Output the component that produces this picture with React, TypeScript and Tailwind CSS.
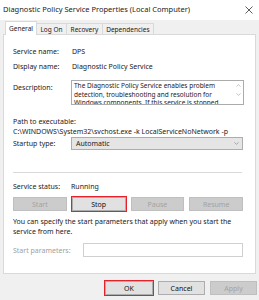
import { ChevronDown, ChevronUp } from "lucide-react";

const font = { fontFamily: '"Noto Sans", "Liberation Sans", sans-serif' };

function Btn({
  label,
  disabled,
  marked,
  className = "",
}: {
  label: string;
  disabled?: boolean;
  marked?: boolean;
  className?: string;
}) {
  return (
    <div
      className={`flex items-center justify-center h-[14px] text-[7px] leading-none ${
        disabled ? "bg-[#cccccc] text-[#a3a3a3] border border-[#bfbfbf]" : "bg-[#e1e1e1] text-[#111] border border-[#adadad]"
      } ${marked ? "outline outline-[1.5px] outline-[#e5212b]" : ""} ${className}`}
    >
      {label}
    </div>
  );
}

export default function App() {
  return (
    <div className="w-[259px] h-[300px] bg-[#f0f0f0] text-[#1a1a1a] overflow-hidden" style={font}>
      {/* Barra de título */}
      <div className="h-[20px] bg-white flex items-center justify-between pl-[3px] pr-[6px]">
        <span className="text-[7.5px] text-[#222]">Diagnostic Policy Service Properties (Local Computer)</span>
        <svg width="8" height="8" viewBox="0 0 8 8">
          <path d="M0.5 0.5 L7.5 7.5 M7.5 0.5 L0.5 7.5" stroke="#333" strokeWidth="0.8" />
        </svg>
      </div>

      {/* Abas */}
      <div className="flex items-end pl-[5px] h-[15px] relative z-10">
        <div className="h-[14px] px-[3px] bg-white border border-b-0 border-[#d9d9d9] text-[6.5px] flex items-center">General</div>
        <div className="h-[12px] px-[3.5px] border border-l-0 border-b-0 border-[#d9d9d9] text-[6.5px] flex items-center">Log On</div>
        <div className="h-[12px] px-[3.5px] border border-l-0 border-b-0 border-[#d9d9d9] text-[6.5px] flex items-center">Recovery</div>
        <div className="h-[12px] px-[3.5px] border border-l-0 border-b-0 border-[#d9d9d9] text-[6.5px] flex items-center">Dependencies</div>
      </div>

      {/* Painel */}
      <div className="mx-[3px] -mt-px h-[240px] bg-white border border-[#d9d9d9] px-[9px] pt-[11px] text-[7px] leading-[9px]">
        <div className="flex items-center h-[10px]">
          <span className="w-[59px]">Service name:</span>
          <span>DPS</span>
        </div>
        <div className="flex items-center h-[10px] mt-[5px]">
          <span className="w-[59px]">Display name:</span>
          <span>Diagnostic Policy Service</span>
        </div>
        <div className="flex mt-[9px]">
          <span className="w-[58px] pt-[3px]">Description:</span>
          <div className="flex-1 mr-[2px] h-[25px] border border-[#ababab] flex overflow-hidden">
            <div className="flex-1 pl-[2px] pt-[1px] text-[6.5px] leading-[8.5px] overflow-hidden">
              The Diagnostic Policy Service enables problem detection, troubleshooting and resolution for Windows components. If this service is stopped
            </div>
            <div className="w-[9px] flex flex-col items-center text-[#777] pt-[1px]">
              <ChevronUp size={7} strokeWidth={1.5} />
              <ChevronDown size={7} strokeWidth={1.5} className="mt-[2px]" />
            </div>
          </div>
        </div>
        <div className="mt-[12px]">Path to executable:</div>
        <div className="mt-px whitespace-nowrap">C:\WINDOWS\System32\svchost.exe -k LocalServiceNoNetwork -p</div>
        <div className="flex items-center mt-[1px]">
          <span className="w-[58px]">Startup type:</span>
          <div className="flex-1 mr-[3px] h-[13px] bg-[#e5e5e5] border border-[#adadad] flex items-center justify-between pl-[4px] pr-[2px]">
            <span>Automatic</span>
            <ChevronDown size={7} strokeWidth={1.5} className="text-[#555]" />
          </div>
        </div>
        <div className="mt-[22px] mr-[4px] h-px bg-[#d9d9d9]" />
        <div className="flex items-center mt-[9px]">
          <span className="w-[58px]">Service status:</span>
          <span>Running</span>
        </div>
        <div className="grid grid-cols-4 gap-[5px] mt-[6px] mr-[3px]">
          <Btn label="Start" disabled />
          <Btn label="Stop" marked />
          <Btn label="Pause" disabled />
          <Btn label="Resume" disabled />
        </div>
        <div className="mt-[6px] leading-[10px]">
          You can specify the start parameters that apply when you start the service from here.
        </div>
        <div className="flex items-center mt-[6px]">
          <span className="w-[70px] text-[#a0a0a0]">Start parameters:</span>
          <div className="flex-1 mr-[3px] h-[14px] border border-[#d0d0d0]" />
        </div>
      </div>

      {/* Botões de baixo */}
      <div className="flex justify-end gap-[5px] pr-[2px] mt-[7px]">
        <Btn label="OK" marked className="w-[48px]" />
        <Btn label="Cancel" className="w-[47px]" />
        <Btn label="Apply" disabled className="w-[47px]" />
      </div>
    </div>
  );
}
